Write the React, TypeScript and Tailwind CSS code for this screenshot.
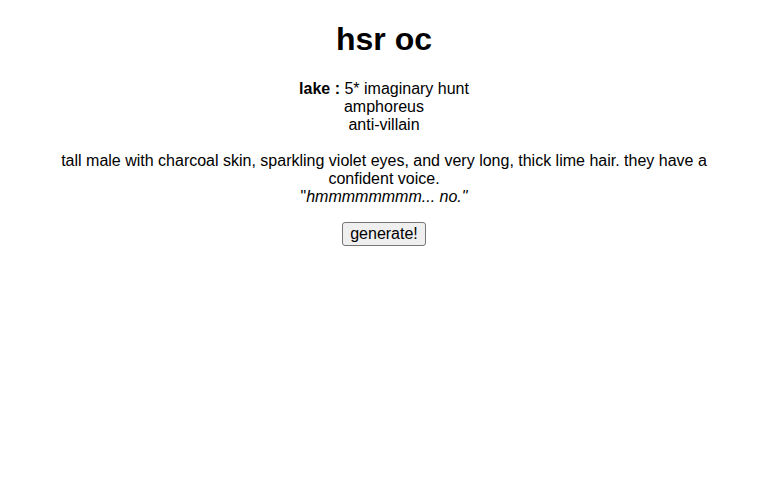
import { useState } from "react"

type Oc = {
  name: string
  rarity: string
  path: string
  faction: string
  role: string
  look: string
  quote: string
}

const sample: Oc = {
  name: "lake",
  rarity: "5*",
  path: "imaginary hunt",
  faction: "amphoreus",
  role: "anti-villain",
  look: "tall male with charcoal skin, sparkling violet eyes, and very long, thick lime hair. they have a confident voice.",
  quote: "hmmmmmmmm... no.",
}

export default function App() {
  const [oc, setOc] = useState<Oc>(sample)

  return (
    <div className="min-h-screen bg-white text-black px-2 text-center font-['Liberation_Sans',Arial,sans-serif] text-base leading-[18px]">
      <div className="mx-auto max-w-[700px] pt-[21px]">
        <h1 className="text-[32px] font-bold leading-[37px]">hsr oc</h1>

        <p className="mt-[22px]">
          <b>{oc.name} :</b> {oc.rarity} {oc.path}
          <br />
          {oc.faction}
          <br />
          {oc.role}
          <br />
          <br />
          {oc.look}
          <br />
          "<i>{oc.quote}"</i>
        </p>

        <button
          className="mt-4 rounded-[3px] border border-[#767676] bg-[#efefef] px-[7px] py-[2px] text-base leading-[18px] text-black"
          onClick={() => setOc({ ...sample })}
        >
          generate!
        </button>
      </div>
    </div>
  )
}
